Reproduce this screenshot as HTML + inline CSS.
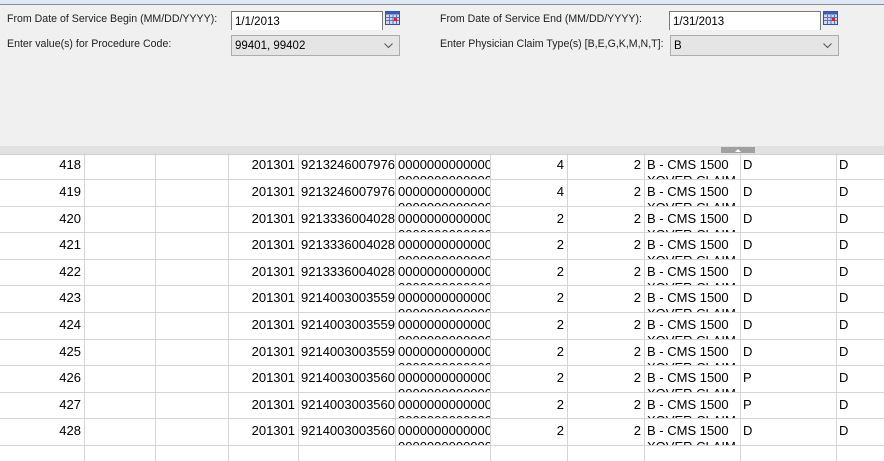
<!DOCTYPE html>
<html style="overflow:hidden;height:461px"><head><meta charset="utf-8"><style>
body{margin:0;width:884px;height:461px;overflow:hidden;background:#fff;position:relative;font-family:"Liberation Sans",Arial,sans-serif}
.top{position:absolute;left:0;top:0;width:884px;height:146px;background:#f0f0f0}
.tabs{position:absolute;left:0;top:0;width:884px;height:4px;background:#dfe9f5;border-bottom:1px solid #8a8a8a}
.lbl{position:absolute;font-size:10.6px;color:#1e1e1e;white-space:nowrap}
.inp{position:absolute;height:19px;background:#fff;border:1px solid #7a7a7a;border-bottom:none;font-size:11.5px;line-height:20px;padding-left:3px;box-sizing:border-box;color:#000}
.dd{position:absolute;height:21px;background:#e5e5e5;border:1px solid #acacac;font-size:11.5px;line-height:20px;padding-left:3px;box-sizing:border-box;color:#000}
.dd svg{position:absolute;right:6px;top:7px}
.cal{position:absolute;width:15px;height:14px}
.bar{position:absolute;left:0;top:146px;width:884px;height:8px;background:#e1e1e1;border-bottom:1px solid #d0d0d0}
.handle{position:absolute;left:721px;top:147px;width:34px;height:6px;background:#a0a0a0}
.row{position:absolute;left:0;width:884px;height:26.6px;border-bottom:1px solid #d4d4d4;box-sizing:border-box}
.c{position:absolute;top:0;height:25.6px;overflow:hidden;font-size:13px;line-height:16px;padding-top:4px;box-sizing:border-box;border-right:1px solid #d4d4d4;color:#000;white-space:nowrap}
.r{text-align:right;padding-right:3px}
.l{padding-left:2px}
</style></head><body>
<div class="top">
<div class="tabs"></div>
<div class="lbl" style="left:7px;top:13px">From Date of Service Begin (MM/DD/YYYY):</div>
<div class="lbl" style="left:7px;top:38px">Enter value(s) for Procedure Code:</div>
<div class="inp" style="left:231px;top:11px;width:152px">1/1/2013</div>
<svg class="cal" style="left:385px;top:11px" viewBox="0 0 15 14"><rect x="0.5" y="0.5" width="14" height="13" fill="#cfd8f0" stroke="#3050a0"/><rect x="0.5" y="0.5" width="14" height="3" fill="#3a5cb8"/><path d="M1 6.5h13M1 9.5h13M4.5 4v9M8 4v9M11.5 4v9" stroke="#6070c0" stroke-width="1"/><rect x="9" y="7" width="3" height="3" fill="#e02020"/></svg>
<div class="dd" style="left:231px;top:35px;width:169px">99401, 99402<svg width="9" height="6" viewBox="0 0 9 6"><path d="M0.5 0.5l4 4 4-4" stroke="#555" fill="none"/></svg></div>
<div class="lbl" style="left:440px;top:13px">From Date of Service End (MM/DD/YYYY):</div>
<div class="lbl" style="left:440px;top:38px">Enter Physician Claim Type(s) [B,E,G,K,M,N,T]:</div>
<div class="inp" style="left:669px;top:11px;width:152px">1/31/2013</div>
<svg class="cal" style="left:823px;top:11px" viewBox="0 0 15 14"><rect x="0.5" y="0.5" width="14" height="13" fill="#cfd8f0" stroke="#3050a0"/><rect x="0.5" y="0.5" width="14" height="3" fill="#3a5cb8"/><path d="M1 6.5h13M1 9.5h13M4.5 4v9M8 4v9M11.5 4v9" stroke="#6070c0" stroke-width="1"/><rect x="9" y="7" width="3" height="3" fill="#e02020"/></svg>
<div class="dd" style="left:670px;top:35px;width:169px">B<svg width="9" height="6" viewBox="0 0 9 6"><path d="M0.5 0.5l4 4 4-4" stroke="#555" fill="none"/></svg></div>
</div>
<div class="bar"></div>
<div class="handle"><svg width="34" height="6" style="position:absolute;left:0;top:0"><path d="M14 5l3-3 3 3z" fill="#fff"/></svg></div>
<div id="g"></div>
<div class="row" style="top:446.4px;height:14.6px;border:none;overflow:hidden">
<div class="c" style="left:0;width:85px"></div><div class="c" style="left:85px;width:71px"></div><div class="c" style="left:156px;width:73px"></div><div class="c" style="left:229px;width:70px"></div><div class="c" style="left:299px;width:97px"></div><div class="c" style="left:396px;width:95px"></div><div class="c" style="left:491px;width:77px"></div><div class="c" style="left:568px;width:77px"></div><div class="c" style="left:645px;width:96px"></div><div class="c" style="left:741px;width:96px"></div>
</div>
<script>
var d=[[418,"9213246007976",4,"D"],[419,"9213246007976",4,"D"],[420,"9213336004028",2,"D"],[421,"9213336004028",2,"D"],[422,"9213336004028",2,"D"],[423,"9214003003559",2,"D"],[424,"9214003003559",2,"D"],[425,"9214003003559",2,"D"],[426,"9214003003560",2,"P"],[427,"9214003003560",2,"P"],[428,"9214003003560",2,"D"]];
var h="";
d.forEach(function(r,i){var t=153.4+26.6*i;
h+='<div class="row" style="top:'+t+'px">'+
'<div class="c r" style="left:0;width:85px">'+r[0]+'</div>'+
'<div class="c" style="left:85px;width:71px"></div>'+
'<div class="c" style="left:156px;width:73px"></div>'+
'<div class="c r" style="left:229px;width:70px">201301</div>'+
'<div class="c l" style="left:299px;width:97px">'+r[1]+'</div>'+
'<div class="c l" style="left:396px;width:95px">0000000000000<br>0000000000000</div>'+
'<div class="c r" style="left:491px;width:77px">'+r[2]+'</div>'+
'<div class="c r" style="left:568px;width:77px">2</div>'+
'<div class="c l" style="left:645px;width:96px">B - CMS 1500<br>XOVER CLAIM</div>'+
'<div class="c l" style="left:741px;width:96px">'+r[3]+'</div>'+
'<div class="c l" style="left:837px;width:47px;border:none">D</div></div>';});
document.getElementById("g").innerHTML=h;
</script>
</body></html>
